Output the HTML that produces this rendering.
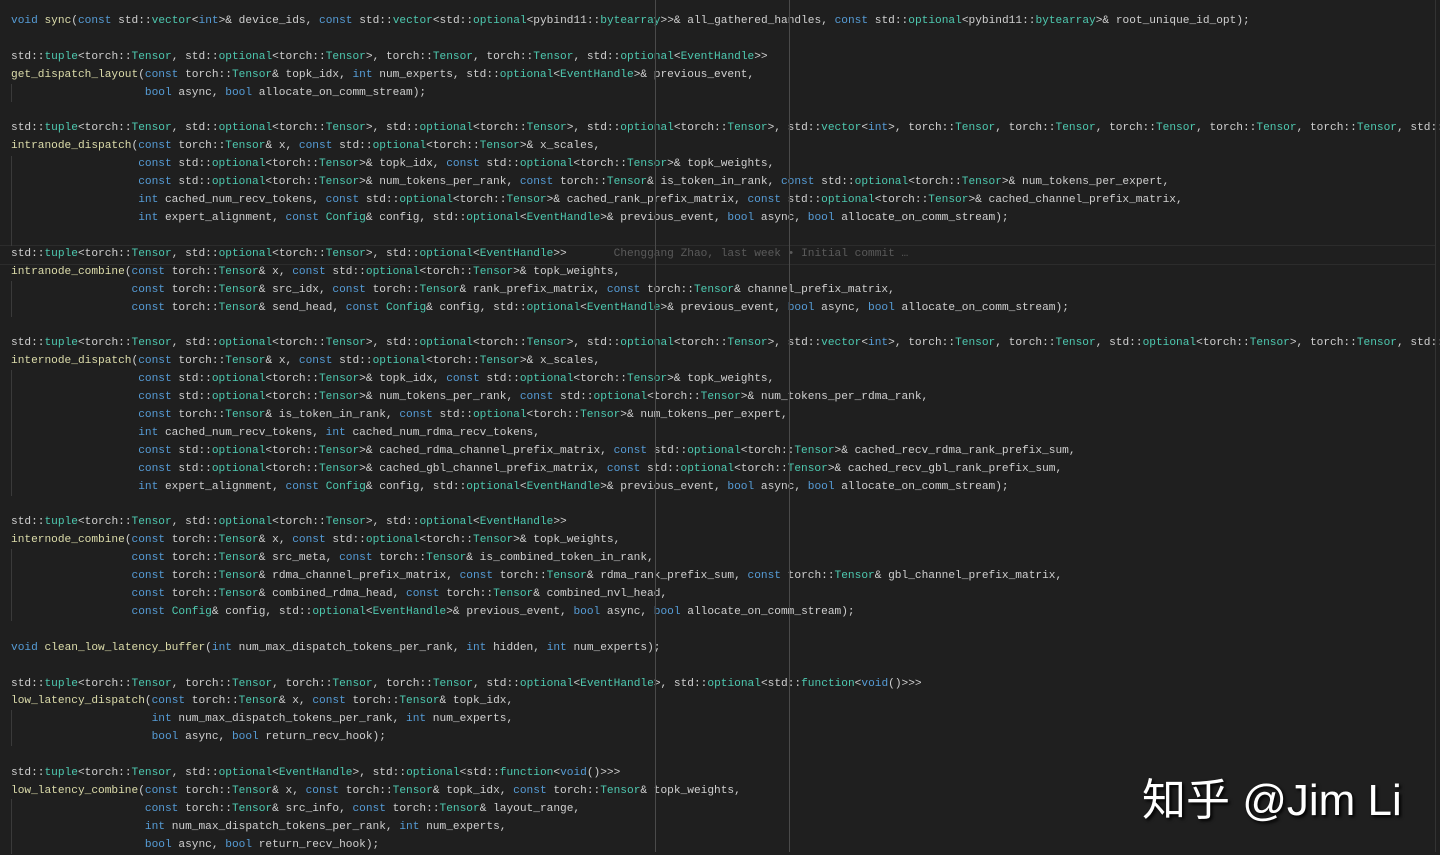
<!DOCTYPE html>
<html><head><meta charset="utf-8"><style>
html,body{margin:0;padding:0;background:#1f1f1f;width:1440px;height:852px;overflow:hidden}
#c{position:absolute;left:11px;top:13px;font-family:"Liberation Mono",monospace;font-size:11.17px;line-height:17.9px;color:#d0d0d0;white-space:pre}
i{font-style:normal;color:#569cd6}
b{font-weight:normal;color:#4ec9b0}
u{text-decoration:none;color:#dcdcaa}
.g{color:#5a5a5a}
.v{position:absolute;top:0;width:1px;height:852px;background:#4a4a4a}
.hl{position:absolute;left:0;top:245px;width:1436px;height:18px;border-top:1px solid #2c2c2c;border-bottom:1px solid #2c2c2c}
.ig{position:absolute;width:1px;background:#3a3a3a}
#wm{position:absolute;left:1142px;top:764px;font-family:"Liberation Sans","Noto Sans CJK SC",sans-serif;font-size:44px;color:#fff;text-shadow:2px 2px 3px #000;white-space:nowrap}
</style></head><body>
<div class="hl"></div>
<div class="ig" style="left:11px;top:84px;height:18px"></div>
<div class="ig" style="left:11px;top:156px;height:90px"></div>
<div class="ig" style="left:11px;top:281px;height:36px"></div>
<div class="ig" style="left:11px;top:370px;height:126px"></div>
<div class="ig" style="left:11px;top:549px;height:72px"></div>
<div class="ig" style="left:11px;top:710px;height:36px"></div>
<div class="ig" style="left:11px;top:799px;height:55px"></div>
<div id="c"><i>void</i> <u>sync</u>(<i>const</i> std::<b>vector</b>&lt;<i>int</i>&gt;&amp; device_ids, <i>const</i> std::<b>vector</b>&lt;std::<b>optional</b>&lt;pybind11::<b>bytearray</b>&gt;&gt;&amp; all_gathered_handles, <i>const</i> std::<b>optional</b>&lt;pybind11::<b>bytearray</b>&gt;&amp; root_unique_id_opt);

std::<b>tuple</b>&lt;torch::<b>Tensor</b>, std::<b>optional</b>&lt;torch::<b>Tensor</b>&gt;, torch::<b>Tensor</b>, torch::<b>Tensor</b>, std::<b>optional</b>&lt;<b>EventHandle</b>&gt;&gt;
<u>get_dispatch_layout</u>(<i>const</i> torch::<b>Tensor</b>&amp; topk_idx, <i>int</i> num_experts, std::<b>optional</b>&lt;<b>EventHandle</b>&gt;&amp; previous_event,
                    <i>bool</i> async, <i>bool</i> allocate_on_comm_stream);

std::<b>tuple</b>&lt;torch::<b>Tensor</b>, std::<b>optional</b>&lt;torch::<b>Tensor</b>&gt;, std::<b>optional</b>&lt;torch::<b>Tensor</b>&gt;, std::<b>optional</b>&lt;torch::<b>Tensor</b>&gt;, std::<b>vector</b>&lt;<i>int</i>&gt;, torch::<b>Tensor</b>, torch::<b>Tensor</b>, torch::<b>Tensor</b>, torch::<b>Tensor</b>, torch::<b>Tensor</b>, std::
<u>intranode_dispatch</u>(<i>const</i> torch::<b>Tensor</b>&amp; x, <i>const</i> std::<b>optional</b>&lt;torch::<b>Tensor</b>&gt;&amp; x_scales,
                   <i>const</i> std::<b>optional</b>&lt;torch::<b>Tensor</b>&gt;&amp; topk_idx, <i>const</i> std::<b>optional</b>&lt;torch::<b>Tensor</b>&gt;&amp; topk_weights,
                   <i>const</i> std::<b>optional</b>&lt;torch::<b>Tensor</b>&gt;&amp; num_tokens_per_rank, <i>const</i> torch::<b>Tensor</b>&amp; is_token_in_rank, <i>const</i> std::<b>optional</b>&lt;torch::<b>Tensor</b>&gt;&amp; num_tokens_per_expert,
                   <i>int</i> cached_num_recv_tokens, <i>const</i> std::<b>optional</b>&lt;torch::<b>Tensor</b>&gt;&amp; cached_rank_prefix_matrix, <i>const</i> std::<b>optional</b>&lt;torch::<b>Tensor</b>&gt;&amp; cached_channel_prefix_matrix,
                   <i>int</i> expert_alignment, <i>const</i> <b>Config</b>&amp; config, std::<b>optional</b>&lt;<b>EventHandle</b>&gt;&amp; previous_event, <i>bool</i> async, <i>bool</i> allocate_on_comm_stream);

std::<b>tuple</b>&lt;torch::<b>Tensor</b>, std::<b>optional</b>&lt;torch::<b>Tensor</b>&gt;, std::<b>optional</b>&lt;<b>EventHandle</b>&gt;&gt;       <span class="g">Chenggang Zhao, last week • Initial commit …</span>
<u>intranode_combine</u>(<i>const</i> torch::<b>Tensor</b>&amp; x, <i>const</i> std::<b>optional</b>&lt;torch::<b>Tensor</b>&gt;&amp; topk_weights,
                  <i>const</i> torch::<b>Tensor</b>&amp; src_idx, <i>const</i> torch::<b>Tensor</b>&amp; rank_prefix_matrix, <i>const</i> torch::<b>Tensor</b>&amp; channel_prefix_matrix,
                  <i>const</i> torch::<b>Tensor</b>&amp; send_head, <i>const</i> <b>Config</b>&amp; config, std::<b>optional</b>&lt;<b>EventHandle</b>&gt;&amp; previous_event, <i>bool</i> async, <i>bool</i> allocate_on_comm_stream);

std::<b>tuple</b>&lt;torch::<b>Tensor</b>, std::<b>optional</b>&lt;torch::<b>Tensor</b>&gt;, std::<b>optional</b>&lt;torch::<b>Tensor</b>&gt;, std::<b>optional</b>&lt;torch::<b>Tensor</b>&gt;, std::<b>vector</b>&lt;<i>int</i>&gt;, torch::<b>Tensor</b>, torch::<b>Tensor</b>, std::<b>optional</b>&lt;torch::<b>Tensor</b>&gt;, torch::<b>Tensor</b>, std::
<u>internode_dispatch</u>(<i>const</i> torch::<b>Tensor</b>&amp; x, <i>const</i> std::<b>optional</b>&lt;torch::<b>Tensor</b>&gt;&amp; x_scales,
                   <i>const</i> std::<b>optional</b>&lt;torch::<b>Tensor</b>&gt;&amp; topk_idx, <i>const</i> std::<b>optional</b>&lt;torch::<b>Tensor</b>&gt;&amp; topk_weights,
                   <i>const</i> std::<b>optional</b>&lt;torch::<b>Tensor</b>&gt;&amp; num_tokens_per_rank, <i>const</i> std::<b>optional</b>&lt;torch::<b>Tensor</b>&gt;&amp; num_tokens_per_rdma_rank,
                   <i>const</i> torch::<b>Tensor</b>&amp; is_token_in_rank, <i>const</i> std::<b>optional</b>&lt;torch::<b>Tensor</b>&gt;&amp; num_tokens_per_expert,
                   <i>int</i> cached_num_recv_tokens, <i>int</i> cached_num_rdma_recv_tokens,
                   <i>const</i> std::<b>optional</b>&lt;torch::<b>Tensor</b>&gt;&amp; cached_rdma_channel_prefix_matrix, <i>const</i> std::<b>optional</b>&lt;torch::<b>Tensor</b>&gt;&amp; cached_recv_rdma_rank_prefix_sum,
                   <i>const</i> std::<b>optional</b>&lt;torch::<b>Tensor</b>&gt;&amp; cached_gbl_channel_prefix_matrix, <i>const</i> std::<b>optional</b>&lt;torch::<b>Tensor</b>&gt;&amp; cached_recv_gbl_rank_prefix_sum,
                   <i>int</i> expert_alignment, <i>const</i> <b>Config</b>&amp; config, std::<b>optional</b>&lt;<b>EventHandle</b>&gt;&amp; previous_event, <i>bool</i> async, <i>bool</i> allocate_on_comm_stream);

std::<b>tuple</b>&lt;torch::<b>Tensor</b>, std::<b>optional</b>&lt;torch::<b>Tensor</b>&gt;, std::<b>optional</b>&lt;<b>EventHandle</b>&gt;&gt;
<u>internode_combine</u>(<i>const</i> torch::<b>Tensor</b>&amp; x, <i>const</i> std::<b>optional</b>&lt;torch::<b>Tensor</b>&gt;&amp; topk_weights,
                  <i>const</i> torch::<b>Tensor</b>&amp; src_meta, <i>const</i> torch::<b>Tensor</b>&amp; is_combined_token_in_rank,
                  <i>const</i> torch::<b>Tensor</b>&amp; rdma_channel_prefix_matrix, <i>const</i> torch::<b>Tensor</b>&amp; rdma_rank_prefix_sum, <i>const</i> torch::<b>Tensor</b>&amp; gbl_channel_prefix_matrix,
                  <i>const</i> torch::<b>Tensor</b>&amp; combined_rdma_head, <i>const</i> torch::<b>Tensor</b>&amp; combined_nvl_head,
                  <i>const</i> <b>Config</b>&amp; config, std::<b>optional</b>&lt;<b>EventHandle</b>&gt;&amp; previous_event, <i>bool</i> async, <i>bool</i> allocate_on_comm_stream);

<i>void</i> <u>clean_low_latency_buffer</u>(<i>int</i> num_max_dispatch_tokens_per_rank, <i>int</i> hidden, <i>int</i> num_experts);

std::<b>tuple</b>&lt;torch::<b>Tensor</b>, torch::<b>Tensor</b>, torch::<b>Tensor</b>, torch::<b>Tensor</b>, std::<b>optional</b>&lt;<b>EventHandle</b>&gt;, std::<b>optional</b>&lt;std::<b>function</b>&lt;<i>void</i>()&gt;&gt;&gt;
<u>low_latency_dispatch</u>(<i>const</i> torch::<b>Tensor</b>&amp; x, <i>const</i> torch::<b>Tensor</b>&amp; topk_idx,
                     <i>int</i> num_max_dispatch_tokens_per_rank, <i>int</i> num_experts,
                     <i>bool</i> async, <i>bool</i> return_recv_hook);

std::<b>tuple</b>&lt;torch::<b>Tensor</b>, std::<b>optional</b>&lt;<b>EventHandle</b>&gt;, std::<b>optional</b>&lt;std::<b>function</b>&lt;<i>void</i>()&gt;&gt;&gt;
<u>low_latency_combine</u>(<i>const</i> torch::<b>Tensor</b>&amp; x, <i>const</i> torch::<b>Tensor</b>&amp; topk_idx, <i>const</i> torch::<b>Tensor</b>&amp; topk_weights,
                    <i>const</i> torch::<b>Tensor</b>&amp; src_info, <i>const</i> torch::<b>Tensor</b>&amp; layout_range,
                    <i>int</i> num_max_dispatch_tokens_per_rank, <i>int</i> num_experts,
                    <i>bool</i> async, <i>bool</i> return_recv_hook);</div>
<div class="v" style="left:655px"></div>
<div class="v" style="left:789px"></div>
<div class="v" style="left:1435px;background:#333"></div>
<div id="wm">知乎 @Jim Li</div>
</body></html>
